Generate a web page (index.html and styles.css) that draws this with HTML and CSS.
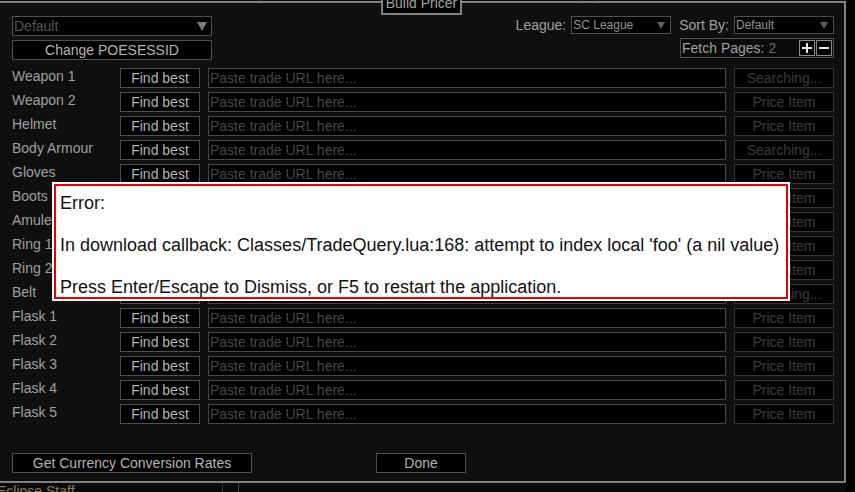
FILE: index.html
```html
<!DOCTYPE html>
<html>
<head>
<meta charset="utf-8">
<link rel="stylesheet" href="styles.css">
</head>
<body>
<div class="topstrip"><span class="tcell c1"></span><span class="tcell c2"></span><span class="tcell c3"></span></div>
<div class="panel">
  <div class="title">Build Pricer</div>
  <div class="header">
    <div class="hleft">
      <div class="dd dd-big"><span class="dd-text dim">Default</span><svg class="arrow-big" viewBox="0 0 10 10" width="10" height="10"><polygon points="0,1 10,1 5,10" fill="#7a7a7a"/></svg></div>
      <div class="btn btn-wide">Change POESESSID</div>
    </div>
    <div class="hright">
      <div class="hrow">
        <span class="lbl">League:</span>
        <div class="dd dd-small"><span class="dd-text">SC League</span><svg class="arrow-small" viewBox="0 0 8 8" width="8" height="8"><polygon points="0,1 8,1 4,8" fill="#5e5e5e"/></svg></div>
        <span class="lbl lbl-sort">Sort By:</span>
        <div class="dd dd-small"><span class="dd-text">Default</span><svg class="arrow-small" viewBox="0 0 8 8" width="8" height="8"><polygon points="0,1 8,1 4,8" fill="#5e5e5e"/></svg></div>
      </div>
      <div class="fetch">
        <span class="fetch-lbl">Fetch Pages: <span class="num">2</span></span>
        <span class="pm"><svg viewBox="0 0 14 14" width="14" height="14"><rect x="2" y="6" width="10" height="2" fill="#e6e6e6"/><rect x="6" y="2" width="2" height="10" fill="#e6e6e6"/></svg></span>
        <span class="pm"><svg viewBox="0 0 14 14" width="14" height="14"><rect x="2" y="6" width="10" height="2" fill="#e6e6e6"/></svg></span>
      </div>
    </div>
  </div>
  <div class="rows">
    <div class="row"><span class="slot">Weapon 1</span><div class="btn">Find best</div><div class="url">Paste trade URL here...</div><div class="price">Searching...</div></div>
    <div class="row"><span class="slot">Weapon 2</span><div class="btn">Find best</div><div class="url">Paste trade URL here...</div><div class="price">Price Item</div></div>
    <div class="row"><span class="slot">Helmet</span><div class="btn">Find best</div><div class="url">Paste trade URL here...</div><div class="price">Price Item</div></div>
    <div class="row"><span class="slot">Body Armour</span><div class="btn">Find best</div><div class="url">Paste trade URL here...</div><div class="price">Searching...</div></div>
    <div class="row"><span class="slot">Gloves</span><div class="btn">Find best</div><div class="url">Paste trade URL here...</div><div class="price">Price Item</div></div>
    <div class="row"><span class="slot">Boots</span><div class="btn">Find best</div><div class="url">Paste trade URL here...</div><div class="price">Price Item</div></div>
    <div class="row"><span class="slot">Amulet</span><div class="btn">Find best</div><div class="url">Paste trade URL here...</div><div class="price">Price Item</div></div>
    <div class="row"><span class="slot">Ring 1</span><div class="btn">Find best</div><div class="url">Paste trade URL here...</div><div class="price">Price Item</div></div>
    <div class="row"><span class="slot">Ring 2</span><div class="btn">Find best</div><div class="url">Paste trade URL here...</div><div class="price">Price Item</div></div>
    <div class="row"><span class="slot">Belt</span><div class="btn">Find best</div><div class="url">Paste trade URL here...</div><div class="price">Searching...</div></div>
    <div class="row"><span class="slot">Flask 1</span><div class="btn">Find best</div><div class="url">Paste trade URL here...</div><div class="price">Price Item</div></div>
    <div class="row"><span class="slot">Flask 2</span><div class="btn">Find best</div><div class="url">Paste trade URL here...</div><div class="price">Price Item</div></div>
    <div class="row"><span class="slot">Flask 3</span><div class="btn">Find best</div><div class="url">Paste trade URL here...</div><div class="price">Price Item</div></div>
    <div class="row"><span class="slot">Flask 4</span><div class="btn">Find best</div><div class="url">Paste trade URL here...</div><div class="price">Price Item</div></div>
    <div class="row"><span class="slot">Flask 5</span><div class="btn">Find best</div><div class="url">Paste trade URL here...</div><div class="price">Price Item</div></div>
  </div>
  <div class="footer">
    <div class="btn btn-currency">Get Currency Conversion Rates</div>
    <div class="btn btn-done">Done</div>
  </div>
  <div class="error">
    <div class="error-inner">
      <p>Error:</p>
      <p>&nbsp;</p>
      <p>In download callback: Classes/TradeQuery.lua:168: attempt to index local 'foo' (a nil value)</p>
      <p>&nbsp;</p>
      <p>Press Enter/Escape to Dismiss, or F5 to restart the application.</p>
    </div>
  </div>
</div>
<div class="bottomstrip">
  <div class="bcell b1"><span class="eclipse">Eclipse Staff</span></div>
  <div class="bcell b2"></div>
</div>
</body>
</html>
```

FILE: styles.css
```css
html, body {
  margin: 0;
  padding: 0;
}
body {
  background: #030303;
  width: 855px;
  height: 492px;
  overflow: hidden;
  font-family: "Liberation Sans", Arial, sans-serif;
  font-size: 14px;
  line-height: 16px;
  color: #a0a0a0;
}

.topstrip {
  height: 1px;
  width: 846px;
  display: flex;
  background: #0c0c0c;
}
.tcell { display: block; height: 1px; border-right: 1px solid #3a3a3a; }
.c1 { width: 259px; }
.c2 { width: 322px; }
.c3 { width: 15px; }

.panel {
  position: relative;
  box-sizing: content-box;
  width: 822px;
  height: 478px;
  border-top: 2px solid #808080;
  border-right: 2px solid #808080;
  border-bottom: 2px solid #808080;
  background: #0f0f0f;
  display: flex;
  flex-direction: column;
  padding: 0 10px 0 12px;
}

.title {
  position: absolute;
  left: 381px;
  top: -10px;
  width: 77px;
  height: 18px;
  border: 2px solid #808080;
  background: #000;
  color: #a0a0a0;
  text-align: center;
  line-height: 16px;
  z-index: 2;
}

.header {
  display: flex;
  justify-content: space-between;
  margin-top: 13px;
}
.hleft {
  display: flex;
  flex-direction: column;
  gap: 4px;
  width: 200px;
}
.hright {
  display: flex;
  flex-direction: column;
  align-items: flex-end;
  gap: 4px;
}
.hrow {
  display: flex;
  align-items: center;
  height: 18px;
}
.lbl {
  color: #a0a0a0;
  margin-right: 5px;
  line-height: 18px;
}
.lbl-sort { margin-left: 8px; }

.dd {
  box-sizing: border-box;
  border: 1px solid #505050;
  background: #000;
  display: flex;
  align-items: center;
  justify-content: space-between;
  padding: 0 4px 0 1px;
}
.dd-big {
  height: 20px;
  width: 200px;
  padding-right: 4px;
}
.dd-small {
  height: 18px;
  width: 100px;
  font-size: 12px;
  padding-right: 5px;
}
.dd-text { color: #a0a0a0; }
.dd-text.dim { color: #555555; }
.dd-small .dd-text { color: #969696; }
.arrow-big, .arrow-small { display: block; }

.btn {
  box-sizing: border-box;
  height: 20px;
  border: 1px solid #505050;
  background: #000;
  color: #b4b4b4;
  text-align: center;
  line-height: 18px;
  white-space: nowrap;
}
.btn-wide { width: 200px; }

.fetch {
  box-sizing: border-box;
  width: 154px;
  height: 20px;
  border: 1px solid #505050;
  background: #0a0a0a;
  display: flex;
  align-items: center;
  padding: 0 1px;
  gap: 1px;
}
.fetch-lbl {
  flex: 1;
  color: #a0a0a0;
  line-height: 18px;
}
.num { color: #6a6a6a; }
.pm {
  box-sizing: border-box;
  width: 16px;
  height: 16px;
  border: 1px solid #8a8a8a;
  background: #000;
  display: flex;
  align-items: center;
  justify-content: center;
}
.pm svg { display: block; }

.rows {
  display: flex;
  flex-direction: column;
  gap: 4px;
  margin-top: 8px;
}
.row {
  display: grid;
  grid-template-columns: 100px 80px 518px 100px;
  column-gap: 8px;
  height: 20px;
}
.slot {
  color: #a0a0a0;
  line-height: 16px;
  white-space: nowrap;
}
.url {
  box-sizing: border-box;
  height: 20px;
  border: 1px solid #484848;
  background: #000;
  color: #464646;
  line-height: 18px;
  padding-left: 1px;
  white-space: nowrap;
  overflow: hidden;
}
.price {
  box-sizing: border-box;
  height: 20px;
  border: 1px solid #363636;
  background: #000;
  color: #3c3c3c;
  text-align: center;
  line-height: 18px;
}

.footer {
  margin-top: auto;
  padding-bottom: 8px;
  display: flex;
}
.btn-currency { width: 240px; }
.btn-done { width: 90px; margin-left: 124px; }

.error {
  position: absolute;
  left: 52px;
  top: 179px;
  width: 738px;
  height: 119px;
  box-sizing: border-box;
  background: #fff;
  padding: 2px;
  z-index: 3;
}
.error-inner {
  box-sizing: border-box;
  height: 100%;
  border: 2px solid #e60000;
  padding: 7px 0 0 4px;
  color: #111;
  font-size: 18px;
  line-height: 21px;
  white-space: nowrap;
}
.error-inner p { margin: 0; }

.bottomstrip {
  height: 9px;
  width: 846px;
  display: flex;
  background: #0a0a0a;
  overflow: hidden;
}
.bcell { height: 9px; box-sizing: border-box; }
.b1 { width: 223px; border-right: 1px solid #333; overflow: hidden; }
.b2 { width: 16px; border-right: 1px solid #444; }
.eclipse {
  display: block;
  margin-left: -3px;
  color: #857d4c;
  line-height: 16px;
  white-space: nowrap;
}
```
